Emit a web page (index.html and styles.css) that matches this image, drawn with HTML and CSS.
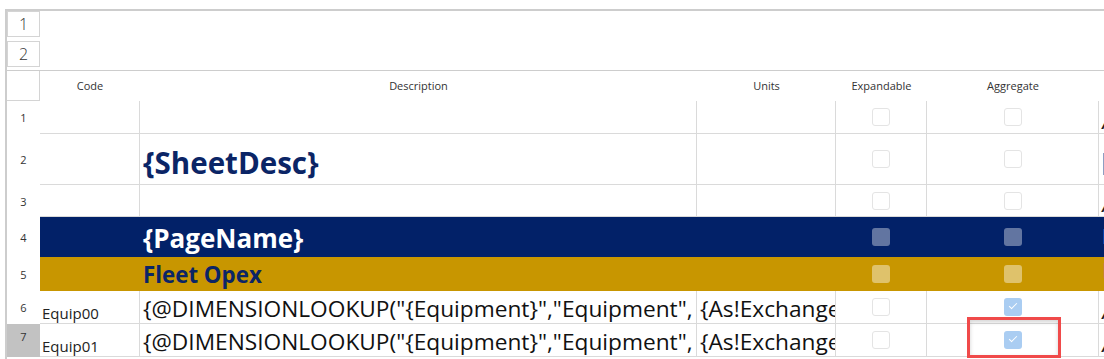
FILE: index.html
```html
<!DOCTYPE html>
<html lang="en">
<head>
    <meta charset="UTF-8">
    <title>Sheet Template</title>
    <link rel="stylesheet" href="styles.css">
</head>
<body>
    <div class="frame">
        <div class="outline">
            <div class="level">1</div>
            <div class="level">2</div>
        </div>

        <div class="sheet">
            <!-- header -->
            <div class="corner"></div>
            <div class="colhead">Code</div>
            <div class="colhead">Description</div>
            <div class="colhead">Units</div>
            <div class="colhead">Expandable</div>
            <div class="colhead">Aggregate</div>
            <div class="colhead"></div>

            <!-- row 1 -->
            <div class="rowhead">1</div>
            <div class="cell"></div>
            <div class="cell"></div>
            <div class="cell"></div>
            <div class="cell check"><span class="box"></span></div>
            <div class="cell check"><span class="box"></span></div>
            <div class="cell edge"><i>A</i></div>

            <!-- row 2 -->
            <div class="rowhead">2</div>
            <div class="cell"></div>
            <div class="cell title">{SheetDesc}</div>
            <div class="cell"></div>
            <div class="cell check"><span class="box"></span></div>
            <div class="cell check"><span class="box"></span></div>
            <div class="cell edge"><span class="bar"></span></div>

            <!-- row 3 -->
            <div class="rowhead">3</div>
            <div class="cell"></div>
            <div class="cell"></div>
            <div class="cell"></div>
            <div class="cell check"><span class="box"></span></div>
            <div class="cell check"><span class="box"></span></div>
            <div class="cell edge"><i>A</i></div>

            <!-- row 4 -->
            <div class="rowhead">4</div>
            <div class="cell navy"></div>
            <div class="cell navy page">{PageName}</div>
            <div class="cell navy"></div>
            <div class="cell navy check"><span class="box"></span></div>
            <div class="cell navy check"><span class="box"></span></div>
            <div class="cell navy edge"><b>I</b></div>

            <!-- row 5 -->
            <div class="rowhead">5</div>
            <div class="cell gold"></div>
            <div class="cell gold group">Fleet Opex</div>
            <div class="cell gold"></div>
            <div class="cell gold check"><span class="box"></span></div>
            <div class="cell gold check"><span class="box"></span></div>
            <div class="cell gold edge"><b>I</b></div>

            <!-- row 6 -->
            <div class="rowhead">6</div>
            <div class="cell code">Equip00</div>
            <div class="cell formula">{@DIMENSIONLOOKUP("{Equipment}","Equipment",</div>
            <div class="cell formula">{As!Exchange</div>
            <div class="cell check"><span class="box"></span></div>
            <div class="cell check"><span class="box on"></span></div>
            <div class="cell edge"><i>A</i></div>

            <!-- row 7 -->
            <div class="rowhead selected">7</div>
            <div class="cell code">Equip01</div>
            <div class="cell formula">{@DIMENSIONLOOKUP("{Equipment}","Equipment",</div>
            <div class="cell formula">{As!Exchange</div>
            <div class="cell check"><span class="box"></span></div>
            <div class="cell check"><span class="box on"></span></div>
            <div class="cell edge"><i>A</i></div>
        </div>

        <div class="highlight"></div>
    </div>
</body>
</html>
```

FILE: styles.css
```css
body {
    margin: 0;
    background: #fff;
    font-family: "Open Sans", "Noto Sans", sans-serif;
    color: #222;
    overflow: hidden;
}
.frame {
    position: relative;
    margin: 9px 0 0 5px;
    border-top: 2px solid #cdcdcd;
    border-left: 2px solid #cdcdcd;
    height: 350px;
}
.outline {
    display: flex;
    flex-direction: column;
    gap: 4px;
    padding-bottom: 3px;
    border-bottom: 1px solid #cdcdcd;
}
.level {
    width: 33px;
    height: 26px;
    box-sizing: border-box;
    border: 1px solid #d4d4d4;
    font-size: 16px;
    font-weight: 300;
    color: #333;
    text-align: center;
    line-height: 24px;
}
.sheet {
    display: grid;
    grid-template-columns: 33px 100px 557px 139px 91px 172px 40px;
    grid-template-rows: 30px 33px 51px 32px 40px 34px 33px 33px;
}
.corner {
    border-right: 1px solid #d4d4d4;
    border-bottom: 1px solid #d4d4d4;
}
.colhead {
    font-size: 11px;
    color: #333;
    text-align: center;
    line-height: 30px;
    white-space: nowrap;
}
.rowhead {
    font-size: 11px;
    color: #333;
    text-align: center;
    display: flex;
    align-items: center;
    justify-content: center;
}
.rowhead.selected {
    background: #c2c2c2;
    padding-bottom: 8px;
}
.cell {
    box-sizing: border-box;
    border-right: 1px solid #dadada;
    border-bottom: 1px solid #dadada;
    overflow: hidden;
    white-space: nowrap;
    display: flex;
    align-items: flex-end;
}
.navy {
    background: #022168;
    border-color: #022168;
}
.gold {
    background: #c89600;
    border-color: #c89600;
}
.title {
    font-size: 29.5px;
    font-weight: 700;
    color: #0b2566;
    padding: 0 0 1px 3px;
}
.page {
    font-size: 26px;
    font-weight: 700;
    color: #fff;
    padding: 0 0 0 3px;
}
.group {
    font-size: 22.3px;
    font-weight: 700;
    color: #0b2566;
    padding: 0 0 0 3px;
}
.code {
    font-size: 15px;
    padding: 0 0 0 2px;
    line-height: 20px;
}
.formula {
    font-size: 22.7px;
    padding: 0 0 0 3px;
    color: #111;
    line-height: 28px;
}
.check {
    align-items: center;
    justify-content: center;
}
.box {
    width: 18px;
    height: 18px;
    box-sizing: border-box;
    border: 1px solid #e4e4e4;
    border-radius: 3px;
    background: #fff;
    position: relative;
}
.navy .box {
    border: none;
    background: rgba(255, 255, 255, 0.38);
}
.gold .box {
    border: none;
    background: rgba(255, 255, 255, 0.42);
}
.box.on {
    border: none;
    background: #aacdf2;
}
.box.on::after {
    content: "";
    position: absolute;
    left: 5px;
    top: 5px;
    width: 7px;
    height: 3px;
    border-left: 1.5px solid #fff;
    border-bottom: 1.5px solid #fff;
    transform: rotate(-45deg);
}
.edge {
    padding-left: 3px;
    font-size: 14px;
}
.edge i {
    font-weight: 700;
    color: #222;
}
.edge b {
    font-size: 22px;
    margin-bottom: 6px;
}
.navy.edge b {
    color: #fff;
}
.gold.edge b {
    color: #0b2566;
}
.bar {
    display: block;
    width: 3px;
    height: 22px;
    margin: 0 0 9px 1px;
    background: #8e9ec2;
}
.highlight {
    position: absolute;
    left: 960px;
    top: 306px;
    width: 94px;
    height: 41px;
    box-sizing: border-box;
    border: 3px solid #f04a4a;
    box-shadow: inset 0 2px 4px rgba(0, 0, 0, 0.18);
}
```
